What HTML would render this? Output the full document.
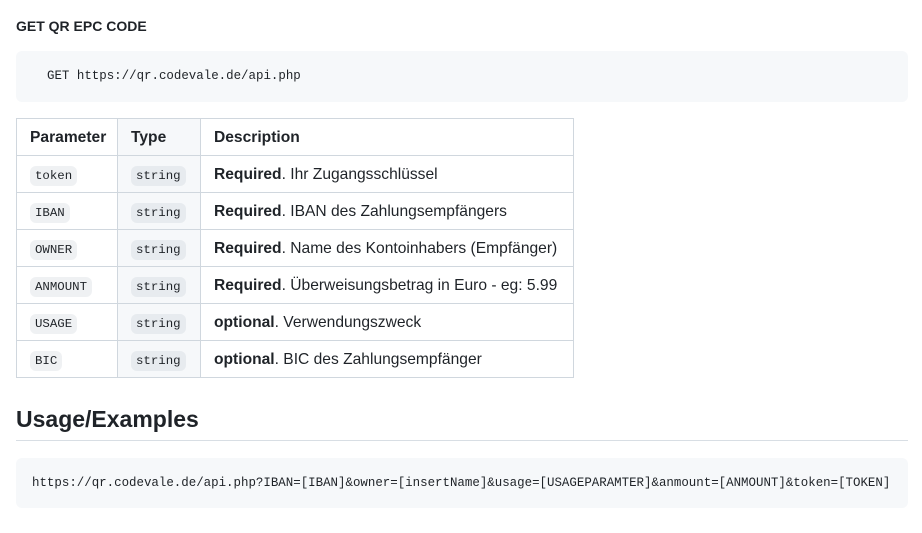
<!DOCTYPE html>
<html><head><meta charset="utf-8"><style>
body{margin:0;background:#fff;color:#1f2328;font-family:"Liberation Sans",sans-serif;width:922px;height:533px;overflow:hidden;position:relative}
h4{position:absolute;left:16px;top:16px;margin:0;font-size:14px;font-weight:bold;line-height:20px}
.pre{position:absolute;left:16px;width:892px;background:#f6f8fa;border-radius:6px;font-family:"Liberation Mono",monospace;font-size:12.45px;color:#1f2328}
table{position:absolute;left:16px;top:118px;border-collapse:collapse;font-size:15.6px;table-layout:fixed;width:557px}
td,th{border:1px solid #d0d7de;height:36px;padding:2px 0 0 13px;box-sizing:border-box;text-align:left;white-space:nowrap;overflow:visible}
th{font-weight:600}
td:nth-child(2),th:nth-child(2){background:#f6f8fa}
code{font-family:"Liberation Mono",monospace;font-size:12.4px;background:rgba(175,184,193,0.2);border-radius:6px;padding:3px 5px}
b{font-weight:bold}
h2{position:absolute;left:16px;top:404px;margin:0;font-size:23px;font-weight:600;line-height:30px;width:892px;border-bottom:1px solid #d8dee4;padding-bottom:6px}
</style></head><body>
<h4>GET QR EPC CODE</h4>
<div class="pre" style="top:51px;height:51px;line-height:51px;padding-left:31px;box-sizing:border-box">GET https://qr.codevale.de/api.php</div>
<table>
<colgroup><col style="width:101px"><col style="width:83px"><col style="width:373px"></colgroup>
<tr style="height:37px"><th>Parameter</th><th>Type</th><th>Description</th></tr>
<tr style="height:37px"><td><code>token</code></td><td><code>string</code></td><td><b>Required</b>. Ihr Zugangsschlüssel</td></tr>
<tr style="height:37px"><td><code>IBAN</code></td><td><code>string</code></td><td><b>Required</b>. IBAN des Zahlungsempfängers</td></tr>
<tr style="height:37px"><td><code>OWNER</code></td><td><code>string</code></td><td><b>Required</b>. Name des Kontoinhabers (Empfänger)</td></tr>
<tr style="height:37px"><td><code>ANMOUNT</code></td><td><code>string</code></td><td><b>Required</b>. Überweisungsbetrag in Euro - eg: 5.99</td></tr>
<tr style="height:37px"><td><code>USAGE</code></td><td><code>string</code></td><td><b>optional</b>. Verwendungszweck</td></tr>
<tr style="height:37px"><td><code>BIC</code></td><td><code>string</code></td><td><b>optional</b>. BIC des Zahlungsempfänger</td></tr>
</table>
<h2>Usage/Examples</h2>
<div class="pre" style="top:458px;height:50px;line-height:50px;padding-left:16px;box-sizing:border-box">https://qr.codevale.de/api.php?IBAN=[IBAN]&amp;owner=[insertName]&amp;usage=[USAGEPARAMTER]&amp;anmount=[ANMOUNT]&amp;token=[TOKEN]</div>
</body></html>
